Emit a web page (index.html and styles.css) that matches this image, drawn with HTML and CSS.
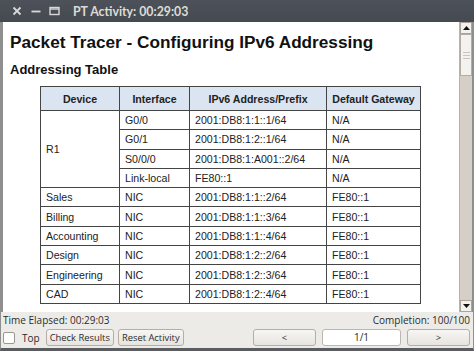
FILE: index.html
```html
<!DOCTYPE html>
<html lang="en">
  <head>
    <meta charset="UTF-8" />
    <title>PT Activity: 00:29:03</title>
    <link rel="stylesheet" href="styles.css">
  </head>
  <body>
    <div class="window">
      <div class="titlebar">
        <span class="wbtn">
          <svg width="10" height="10" viewBox="0 0 10 10"><path d="M1.5 1.5l7 7M8.5 1.5l-7 7" stroke="#d8d8d8" stroke-width="1.8"/></svg>
        </span>
        <span class="wbtn">
          <svg width="10" height="10" viewBox="0 0 10 10"><path d="M0.5 5.5h9" stroke="#d8d8d8" stroke-width="1.8"/></svg>
        </span>
        <span class="wbtn">
          <svg width="11" height="10" viewBox="0 0 11 10"><rect x="1" y="1.5" width="9" height="7" fill="none" stroke="#d8d8d8" stroke-width="1.4"/><path d="M1 3h9" stroke="#d8d8d8" stroke-width="1.4"/></svg>
        </span>
        <span class="wtitle">PT Activity: 00:29:03</span>
      </div>

      <div class="main">
        <div class="page">
          <h1>Packet Tracer - Configuring IPv6 Addressing</h1>
          <h2>Addressing Table</h2>
          <table class="addr">
            <colgroup>
              <col class="c-dev">
              <col class="c-if">
              <col class="c-ip">
              <col class="c-gw">
            </colgroup>
            <thead>
              <tr>
                <th>Device</th>
                <th>Interface</th>
                <th>IPv6 Address/Prefix</th>
                <th>Default Gateway</th>
              </tr>
            </thead>
            <tbody>
              <tr><td rowspan="4">R1</td><td>G0/0</td><td>2001:DB8:1:1::1/64</td><td>N/A</td></tr>
              <tr><td>G0/1</td><td>2001:DB8:1:2::1/64</td><td>N/A</td></tr>
              <tr><td>S0/0/0</td><td>2001:DB8:1:A001::2/64</td><td>N/A</td></tr>
              <tr><td>Link-local</td><td>FE80::1</td><td>N/A</td></tr>
              <tr><td>Sales</td><td>NIC</td><td>2001:DB8:1:1::2/64</td><td>FE80::1</td></tr>
              <tr><td>Billing</td><td>NIC</td><td>2001:DB8:1:1::3/64</td><td>FE80::1</td></tr>
              <tr><td>Accounting</td><td>NIC</td><td>2001:DB8:1:1::4/64</td><td>FE80::1</td></tr>
              <tr><td>Design</td><td>NIC</td><td>2001:DB8:1:2::2/64</td><td>FE80::1</td></tr>
              <tr><td>Engineering</td><td>NIC</td><td>2001:DB8:1:2::3/64</td><td>FE80::1</td></tr>
              <tr><td>CAD</td><td>NIC</td><td>2001:DB8:1:2::4/64</td><td>FE80::1</td></tr>
            </tbody>
          </table>
        </div>
        <div class="scrollbar">
          <div class="sb-arrow">
            <svg width="7" height="4" viewBox="0 0 7 4"><path d="M0 4h7L3.5 0z" fill="#111"/></svg>
          </div>
          <div class="sb-thumb">
            <span></span><span></span><span></span>
          </div>
          <div class="sb-track"></div>
          <div class="sb-arrow">
            <svg width="7" height="4" viewBox="0 0 7 4"><path d="M0 0h7L3.5 4z" fill="#111"/></svg>
          </div>
        </div>
      </div>

      <div class="status">
        <div class="status-row">
          <span>Time Elapsed: 00:29:03</span>
          <span>Completion: 100/100</span>
        </div>
        <div class="controls">
          <label class="top"><span class="check"></span>Top</label>
          <button class="btn">Check Results</button>
          <button class="btn">Reset Activity</button>
          <div class="pager">
            <button class="btn nav">&lt;</button>
            <span class="pagefield">1/1</span>
            <button class="btn nav">&gt;</button>
          </div>
        </div>
      </div>
    </div>
  </body>
</html>
```

FILE: styles.css
```css
* {
  box-sizing: border-box;
}

body {
  margin: 0;
  width: 474px;
  height: 351px;
  overflow: hidden;
  background: #3c3f45;
}

.window {
  display: flex;
  flex-direction: column;
  height: 351px;
}

/* title bar */
.titlebar {
  height: 22px;
  flex: none;
  display: flex;
  align-items: center;
  padding-left: 7px;
  background: linear-gradient(#4d5159, #454950);
  font-family: Lato, "DejaVu Sans", sans-serif;
  font-weight: bold;
  font-size: 12.3px;
  color: #dedbd4;
}

.wbtn {
  width: 19px;
  display: flex;
  justify-content: center;
  align-items: center;
}

.wtitle {
  margin-left: 9px;
}

/* document area */
.main {
  height: 290px;
  flex: none;
  display: flex;
  background: #ffffff;
  border-left: 3px solid #8f8f8f;
  border-right: 2px solid #8f8f8f;
}

.page {
  flex: 1;
  overflow: hidden;
  padding: 10px 0 0 7px;
  font-family: "Liberation Sans", Arial, sans-serif;
  color: #111;
}

.page h1 {
  margin: 0;
  font-size: 17.2px;
  line-height: 20px;
}

.page h2 {
  margin: 10px 0 0;
  font-size: 13px;
  line-height: 16px;
}

.addr {
  margin: 8px 0 0 30px;
  width: 380px;
  table-layout: fixed;
  border-collapse: collapse;
  font-size: 10.6px;
  color: #222;
}

.addr th,
.addr td {
  border: 1px solid #444;
  height: 19.3px;
  padding: 0 5px;
  text-align: left;
  white-space: nowrap;
  overflow: hidden;
}

.addr th {
  height: 24px;
  background: #dbe5f1;
  text-align: center;
  font-weight: bold;
}

.c-dev { width: 79px; }
.c-if { width: 70px; }
.c-ip { width: 137px; }
.c-gw { width: 94px; }

/* scrollbar */
.scrollbar {
  width: 13px;
  flex: none;
  display: flex;
  flex-direction: column;
  background: #d5cfc7;
  border-left: 1px solid #b8b2aa;
}

.sb-arrow {
  height: 12px;
  display: flex;
  align-items: center;
  justify-content: center;
  background: #f3f1ee;
  border: 1px solid #a9a39c;
}

.sb-thumb {
  height: 42px;
  display: flex;
  flex-direction: column;
  justify-content: center;
  align-items: center;
  gap: 2px;
  background: #f4f2ef;
  border: 1px solid #b2aca4;
}

.sb-thumb span {
  width: 7px;
  height: 1px;
  background: #c9c4bd;
}

.sb-track {
  flex: 1;
}

/* bottom status */
.status {
  flex: 1;
  background: #edebe8;
  border-left: 1px solid #8f8f8f;
  border-right: 1px solid #8f8f8f;
  border-bottom: 3px solid #5a5c60;
  font-family: "Open Sans", "DejaVu Sans", sans-serif;
  font-size: 10px;
  color: #2c2c2c;
  padding: 2px 3px 0 2px;
}

.status-row {
  display: flex;
  justify-content: space-between;
  height: 13px;
  line-height: 13px;
}

.controls {
  display: flex;
  align-items: center;
  gap: 4px;
  margin-top: 2px;
}

.top {
  display: flex;
  align-items: center;
  gap: 7px;
  margin-right: 2px;
}

.check {
  width: 12px;
  height: 12px;
  background: #ffffff;
  border: 1px solid #9c968f;
  border-radius: 2px;
}

.btn {
  height: 17px;
  padding: 0 3px;
  font: inherit;
  font-size: 9.4px;
  color: #2c2c2c;
  background: linear-gradient(#f7f6f4, #e6e4e0);
  border: 1px solid #b4aea6;
  border-radius: 3px;
}

.pager {
  margin-left: auto;
  display: flex;
  align-items: center;
  gap: 6px;
}

.nav {
  width: 63px;
}

.pagefield {
  width: 79px;
  height: 17px;
  line-height: 15px;
  text-align: center;
  background: #ffffff;
  border: 1px solid #bcb6ae;
  border-radius: 3px;
}
```
